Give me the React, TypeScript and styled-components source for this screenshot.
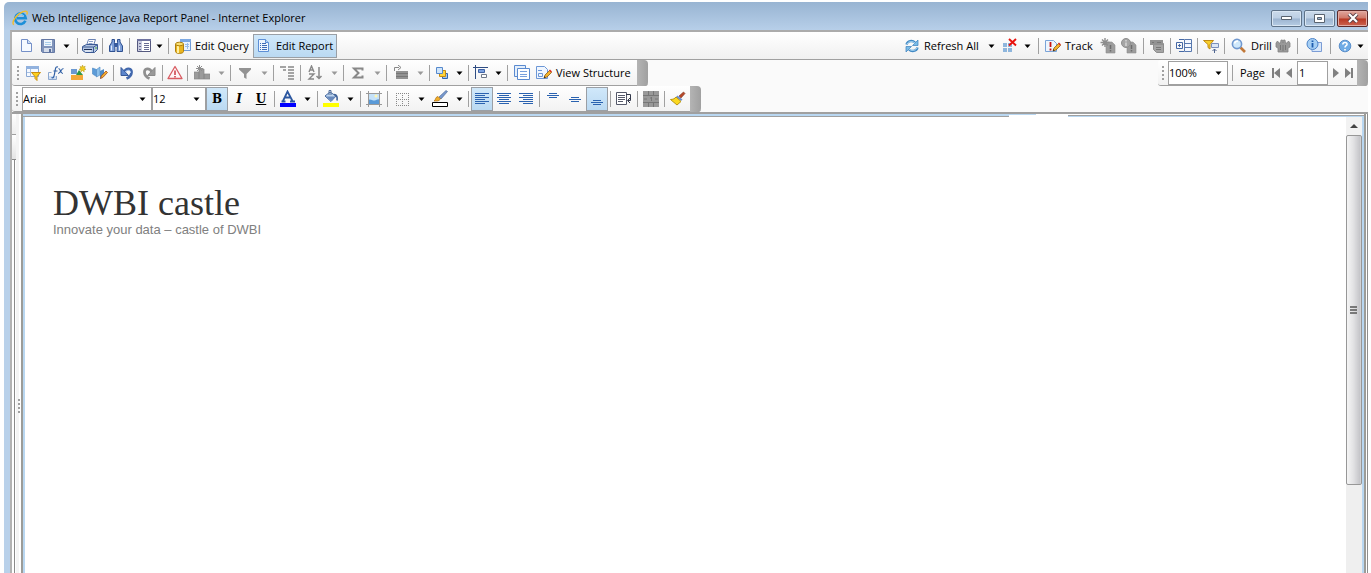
import React from "react";
import styled, { createGlobalStyle } from "styled-components";

const Global = createGlobalStyle`
  * { box-sizing: border-box; }
  body { margin: 0; background: #fff; }
  button, input, select { font: inherit; color: inherit; }
  svg { flex: none; }
`;

const Window = styled.div`
  display: flex;
  flex-direction: column;
  min-height: 100vh;
  padding: 2px 3px 0 4px;
  font-family: "Open Sans", "Noto Sans", sans-serif;
  font-size: 11px;
  line-height: 16px;
  color: #000;
`;

const TitleBar = styled.header`
  display: flex;
  align-items: center;
  height: 28px;
  padding: 4px 0 0 8px;
  gap: 4px;
  background: linear-gradient(#98b4d2, #b7cfe9);
  border-top-left-radius: 5px;
`;

const Title = styled.h1`
  flex: 1;
  margin: 0;
  font-size: 11px;
  font-weight: 400;
  white-space: nowrap;
`;

const Controls = styled.div`
  display: flex;
  gap: 2px;
`;

const Control = styled.button<{ $close?: boolean }>`
  display: flex;
  align-items: center;
  justify-content: center;
  width: 31px;
  height: 17px;
  padding: 0;
  border: 1px solid ${(p) => (p.$close ? "#5e2a2a" : "#5f7389")};
  border-radius: 2px;
  background: ${(p) =>
    p.$close
      ? "linear-gradient(#e0a79e, #cf7768 48%, #b83722 52%, #cc6552)"
      : "linear-gradient(#cbdaea, #bccfe4 48%, #9cb4d0 52%, #b6cce4)"};
  box-shadow: inset 0 0 0 1px ${(p) => (p.$close ? "#e3aca4" : "#d9e6f3")};
`;

const Frame = styled.main`
  display: flex;
  flex: 1;
  flex-direction: column;
  border-left: 6px solid #b9d1ea;
`;

const Inner = styled.div`
  display: flex;
  flex: 1;
  flex-direction: column;
  border-top: 2px solid #ababab;
  border-left: 2px solid #b2b2b2;
`;

const Bar = styled.div`
  display: flex;
  align-items: center;
  height: 28px;
  padding: 0 3px;
  border-bottom: 1px solid #a0a0a0;
  background: linear-gradient(#fff, #f0f0f0);
`;

const Dock = styled.div`
  display: flex;
  justify-content: space-between;
  height: 26px;
  background: #fafafa;
`;

const Strip = styled.div`
  display: flex;
  align-items: center;
  height: 26px;
  border-bottom: 1px solid #a0a0a0;
  border-radius: 3px;
  background: linear-gradient(#fff, #f2f2f2);
`;

const Spacer = styled.div`
  flex: 1;
`;

const EndCap = styled.div`
  width: 11px;
  height: 26px;
  margin-left: 1px;
  border-radius: 0 4px 4px 0;
  background: linear-gradient(90deg, #b4b4b4, #a0a0a0);
`;

const Grip = styled.div<{ $w?: number }>`
  display: flex;
  flex-direction: column;
  align-items: center;
  gap: 2px;
  width: ${(p) => p.$w ?? 10}px;

  i {
    width: 2px;
    height: 2px;
    background: #a0a0a0;
  }
`;

const Sep = styled.div<{ $m?: number }>`
  width: 1px;
  height: 16px;
  margin: 0 ${(p) => p.$m ?? 2}px;
  background: #a0a0a0;
`;

const Tool = styled.button<{ $w?: number; $on?: boolean }>`
  display: flex;
  flex: none;
  align-items: center;
  justify-content: center;
  width: ${(p) => p.$w ?? 22}px;
  height: 24px;
  padding: 0;
  border: 1px solid ${(p) => (p.$on ? "#9a9fa5" : "transparent")};
  background: ${(p) => (p.$on ? "linear-gradient(#d0e8fa, #bad9f2)" : "none")};
`;

const TextTool = styled(Tool)<{ $pad?: number }>`
  justify-content: flex-start;
  gap: 4px;
  padding-left: ${(p) => p.$pad ?? 1}px;
  white-space: nowrap;
`;

const SelectBox = styled.label<{ $w: number }>`
  display: grid;
  align-items: center;
  width: ${(p) => p.$w}px;
  height: 24px;
  border: 1px solid #a0a0a0;
  background: #fff;

  > * { grid-area: 1 / 1; }
  > svg { justify-self: end; margin-right: 5px; pointer-events: none; }
`;

const Select = styled.select`
  width: 100%;
  height: 100%;
  padding: 0;
  border: 0;
  appearance: none;
  background: transparent;
`;

const PageLabel = styled.label`
  display: flex;
  align-items: center;
  padding-left: 3px;
  width: 32px;
`;

const PageInput = styled.input`
  width: 31px;
  height: 24px;
  margin: 0 2px;
  padding: 0 1px;
  border: 1px solid #a0a0a0;
  background: #fff;
`;

const Workspace = styled.div`
  display: flex;
  flex: 1;
  border-top: 2px solid #a0a0a0;
`;

const Rail = styled.aside`
  display: flex;
  width: 9px;
  background: #fff;
`;

const RailTabs = styled.div`
  display: flex;
  flex-direction: column;
  width: 4px;

  div:nth-child(1) { height: 21px; border-bottom: 1px solid #a0a0a0; background: linear-gradient(#fff, #eee); }
  div:nth-child(2) { height: 25px; border-bottom: 1px solid #8a8a8a; background: linear-gradient(#fff, #e4e4e4); }
  div:nth-child(3) { flex: 1; width: 3px; border-right: 1px solid #8a8a8a; }
`;

const RailGrip = styled.div`
  width: 5px;
  padding-top: 285px;
  background: linear-gradient(90deg, #f4f4f4 60%, #fff 60%);
`;

const Report = styled.section`
  display: flex;
  flex: 1;
  flex-direction: column;
  border: solid #9c9c98;
  border-width: 0 2px;
`;

const TopEdge = styled.div`
  display: flex;
  height: 3px;
`;

const EdgeLeft = styled.div`
  flex: 987;
  border-top: 2px solid #b9d7f1;
  border-bottom: 1px solid #a0a0a0;
`;

const EdgeFade = styled.div`
  flex: 27;
  height: 1px;
  background: #b9d7f1;
`;

const EdgeGap = styled.div`
  flex: 32;
`;

const EdgeRight = styled.div`
  flex: 296;
  margin-top: 1px;
  border-top: 1px solid #a0a0a0;
  border-bottom: 1px solid #b9d7f1;
`;

const Sheet = styled.div`
  display: flex;
  flex: 1;
  border: solid #b9d7f1;
  border-width: 0 2px;
`;

const Canvas = styled.article`
  flex: 1;
  padding: 67px 28px;
  background: #fff;
`;

const Heading = styled.h2`
  margin: 0;
  font: 400 36px/38px Georgia, "Liberation Serif", serif;
  color: #333;
`;

const Tagline = styled.p`
  margin: 0;
  font: 13px/16px Arial, "Liberation Sans", sans-serif;
  color: #808080;
`;

const ScrollBar = styled.div`
  display: flex;
  flex-direction: column;
  width: 16px;
  background: #efefef;
`;

const ScrollUp = styled.button`
  display: flex;
  align-items: center;
  justify-content: center;
  height: 18px;
  padding: 0;
  border: 0;
  background: #f2f2f2;
`;

const ScrollTrack = styled.div`
  flex: 1;
`;

const Thumb = styled.div`
  display: flex;
  align-items: center;
  justify-content: center;
  height: 80%;
  border: 1px solid #979797;
  border-radius: 2px;
  background: linear-gradient(90deg, #f5f5f5, #e2e2e4 45%, #c6c6ca 90%, #d8d8da);
`;

const Edge = styled.div`
  width: 2px;
  border-right: 1px solid #8e8e8e;
`;

const Icon = ({ children, w = 16, h = 16 }: { children: React.ReactNode; w?: number; h?: number }) => (
  <svg width={w} height={h} viewBox={`0 0 ${w} ${h}`} fill="none" aria-hidden="true">
    {children}
  </svg>
);

const Arrow = ({ dim }: { dim?: boolean }) => (
  <svg width="7" height="4" viewBox="0 0 7 4" aria-hidden="true">
    <path d="M0.5 0.5h6L3.5 4z" fill={dim ? "#999" : "#000"} />
  </svg>
);

const Caret = ({ w = 14, dim, label }: { w?: number; dim?: boolean; label: string }) => (
  <Tool $w={w} aria-label={label}>
    <Arrow dim={dim} />
  </Tool>
);

const Dots = ({ w }: { w?: number }) => (
  <Grip $w={w}>
    <i /><i /><i /><i />
  </Grip>
);

const Lines = ({ rows }: { rows: [number, number, number][] }) => (
  <Icon>
    {rows.map(([x, y, w]) => (
      <path key={y} d={`M${x} ${y}.5h${w}`} stroke="#2a62b0" />
    ))}
  </Icon>
);

const Pencil = () => (
  <>
    <path d="M8 13l1-3 4.5-4.5 2 2L11 12z" fill="#f3b32c" stroke="#8a5a18" strokeWidth=".8" />
    <path d="M13 5.5l1-1 2 2-1 1z" fill="#d92b1c" />
    <path d="M8 13l.6-1.7 1 1z" fill="#111" />
  </>
);

const IELogo = () => (
  <Icon>
    <path d="M13.400 10.800A5.300 5.300 0 1 1 13.800 8.300H5" stroke="#1d8fd8" strokeWidth="2.600" />
    <path d="M4 6.500C5.500 3.800 10 3.500 12 6" stroke="#8fd8fa" strokeWidth=".9" />
    <path d="M1.800 14.800C-.8 12.500 4 4.500 11 1.700 15 .2 15.800 2 14.800 4.400" stroke="#f2bd2c" strokeWidth="1.400" />
  </Icon>
);
const NewDoc = () => (
  <Icon>
    <path d="M3.500 1.500h6l4 4v8h-10z" fill="#f6faff" stroke="#7590c8" />
    <path d="M9.500 1.500v4h4" fill="#c8dcf4" stroke="#7590c8" />
  </Icon>
);
const Save = () => (
  <Icon>
    <path d="M1.500 1.500h13v13h-12l-1-1z" fill="#8094bb" stroke="#6478a4" />
    <path d="M4 2h8v6H4z" fill="#eef5fc" />
    <path d="M5 4.500h6M5 6.500h6" stroke="#a9cdea" />
    <path d="M4 10h8v4H4z" fill="#d4dcea" />
    <path d="M9 11h2v3H9z" fill="#5b6f9c" />
  </Icon>
);
const Printer = () => (
  <Icon>
    <path d="M6.500 1.500h7l-2 6h-7z" fill="#fff" stroke="#6b83b4" />
    <path d="M7 3.500h4M6.500 5.500h4" stroke="#8aa0c8" />
    <path d="M.5 8.500l4-2h11v5l-3 3h-9l-3-2z" fill="#b4c6e2" stroke="#3c5a94" />
    <path d="M1 9h10.500l3.500-2M11.500 9v5" stroke="#3c5a94" />
    <path d="M2 11.500h8" stroke="#1d2f55" />
    <path d="M3 13h6" stroke="#fff" />
    <path d="M13 10h2" stroke="#4daa3c" />
  </Icon>
);
const Binoculars = () => (
  <Icon>
    <path d="M4 1.500h2.500v3l.5 9H1.500V8L4 4zM9.500 1.500H12V4l2.500 4v5.500H9l.5-9z" fill="#7c9ed8" stroke="#2f5191" />
    <path d="M7 5h2v4H7z" fill="#355aa0" />
    <path d="M3.500 7.500v5M11.500 7.500v5" stroke="#e3eeff" />
  </Icon>
);
const PanelIcon = () => (
  <Icon>
    <path d="M1.500 1.500h13v12h-13z" fill="#fff" stroke="#55597f" />
    <path d="M1 1h14v2H1z" fill="#6f73a0" />
    <path d="M2 3h4v10H2z" fill="#c9cce0" />
    <path d="M3 5.500h2M3 8.500h2M3 11.500h2M8 5.500h5M8 7.500h5M8 9.500h5M8 11.500h5" stroke="#686c94" />
  </Icon>
);
const QueryIcon = () => (
  <Icon>
    <path d="M5.500 1.500h10v11h-10z" fill="#eaf3fd" stroke="#6e9bd8" />
    <path d="M5 1h11v3H5z" fill="#7da9e3" />
    <path d="M10 6.500h4M10 8.500h4M12.500 5v6" stroke="#9bbde8" />
    <path d="M.5 6v7.500c0 2.500 8 2.500 8 0V6" fill="#e9b520" stroke="#ae7f10" />
    <path d="M3 7v8" stroke="#fff0a0" strokeWidth="2" />
    <ellipse cx="4.500" cy="6" rx="4" ry="1.800" fill="#f9df70" stroke="#ae7f10" />
  </Icon>
);
const ReportIcon = () => (
  <Icon>
    <path d="M2.500 1.500h7l3 3v9h-10z" fill="#edf5ff" stroke="#5d8fd6" />
    <path d="M9.500 1.500v3h3" fill="#b6d2f3" stroke="#5d8fd6" />
    <path d="M4 5.500h1M6 5.500h4M4 7.500h1M6 7.500h5M4 9.500h1M6 9.500h5M4 11.500h1M6 11.500h5" stroke="#3d6bb5" />
  </Icon>
);
const Refresh = () => (
  <Icon>
    <path d="M2.500 6.500C3.500 2.500 8.500 2 11 4.500" stroke="#4189c4" strokeWidth="2.400" />
    <path d="M13.500 9.500c-1 4-6 4.500-8.500 2" stroke="#4189c4" strokeWidth="2.400" />
    <path d="M14 2v5.500H8.500zM2 14V8.500h5.500z" fill="#7abce8" stroke="#3b80bb" strokeWidth=".7" />
    <path d="M3 6C4.500 3 8.500 2.800 11 5M13 10c-1.500 3-5.500 3.200-8 1" stroke="#b7e0f8" strokeWidth=".9" />
  </Icon>
);
const Purge = () => (
  <Icon>
    <path d="M1 5h4v4H1zM1 10h4v4H1zM6 10h4v4H6zM6 5h4v4H6z" fill="#8eb6dd" />
    <path d="M7 1l7 6.500M14 1L7 7.500" stroke="#e8120c" strokeWidth="1.900" />
  </Icon>
);
const TrackIcon = () => (
  <Icon>
    <path d="M.5 2.500h8l3 3v8H.5z" fill="#eef5fd" stroke="#7aa4d8" />
    <path d="M5.500 4v5M5.500 10.500v2" stroke="#c81414" strokeWidth="1.800" />
    <Pencil />
  </Icon>
);
const GreyDoc = ({ info }: { info?: boolean }) => (
  <Icon>
    <path d="M6 4h6l3 3v8H6z" fill="#9d9d9d" stroke="#8e8e8e" strokeWidth=".6" />
    {info ? (
      <>
        <circle cx="5" cy="5" r="4.500" fill="#a5a5a5" stroke="#8e8e8e" />
        <path d="M5 2v1.500M5 4.500V8" stroke="#eee" />
      </>
    ) : (
      <path d="M5 0v9M.5 4.500h9M2 1.500l6 6M8 1.500l-6 6" stroke="#8e8e8e" strokeWidth="1.400" />
    )}
    <path d="M10.500 7v4M10.500 12v1.500" stroke="#6c6c6c" strokeWidth="1.500" />
  </Icon>
);
const GreyNote = () => (
  <Icon>
    <path d="M4.500 5.500h10v9h-7l-3-3z" fill="#a4a4a4" stroke="#8d8d8d" />
    <path d="M1 2h13v5H1z" fill="#929292" />
    <path d="M3 4.500h2M8 4.500h4M7 9.500h5M7 11.500h5" stroke="#777" />
  </Icon>
);
const TableIcon = () => (
  <Icon>
    <path d="M8.500 1.500h7v12h-7zM8.500 5.500h7M8.500 9.500h7" fill="#f2f7ff" stroke="#5878ae" />
    <path d="M.5 4.500h6v6h-6zM2 7.500h3M3.500 6v3M3 1.500h5M3 13.500h5" stroke="#4568a5" />
  </Icon>
);
const FilterBar = () => (
  <Icon>
    <path d="M.5 2.500h10L7 6.500V11l-2-1.500v-3z" fill="#f8cf2b" stroke="#c18b12" />
    <path d="M8.500 5.500h7v4h-7z" fill="#dce6f5" stroke="#7b8fba" />
    <path d="M11.500 15v-4M9.500 13l2-2 2 2" stroke="#4f6590" />
  </Icon>
);
const Lens = () => (
  <Icon>
    <path d="M9.500 9.500L14 14" stroke="#c2793a" strokeWidth="2.600" />
    <circle cx="6" cy="6" r="4.600" fill="#cfe8fb" stroke="#7098cf" strokeWidth="1.600" />
    <path d="M3.500 5.500c.5-2 2-2.500 3.500-2.500" stroke="#fff" strokeWidth="1.500" />
  </Icon>
);
const Snapshot = () => (
  <Icon>
    <path d="M1 5l1.500-2L4 5h1.500L6 2h1.500L8 5l.5-3H10l.5 3H12l1.500-2L15 5v4l-2 1v4H3v-4L1 9z" fill="#999" stroke="#838383" strokeWidth=".8" />
    <path d="M5.500 7v5M8 7v6M10.500 7v5" stroke="#777" />
  </Icon>
);
const InfoIcon = () => (
  <Icon>
    <path d="M9 4.500h6.500v9H6V12" fill="#d9e8fa" stroke="#7b9cd5" />
    <circle cx="6.500" cy="6" r="5.500" fill="#a6cff4" stroke="#4c83c8" />
    <path d="M6.500 2.500V4M6.500 5v4.500" stroke="#1d5cae" strokeWidth="1.800" />
  </Icon>
);
const Help = () => (
  <Icon>
    <circle cx="8" cy="8" r="5.800" fill="#6fabe5" stroke="#5b8fca" />
    <path d="M5.800 6.500C6 3.500 10.500 4 10 6.500 9.800 7.800 8 7.800 8 9.500M8 11v1.500" stroke="#fff" strokeWidth="1.600" />
  </Icon>
);
const TableFilter = () => (
  <Icon>
    <path d="M.5 1.500h12v10H.5z" fill="#f5f9ff" stroke="#8aa8d4" />
    <path d="M0 1h13v3H0z" fill="#92b2de" />
    <path d="M4.500 4v8M1 7.500h11" stroke="#a8c0e2" />
    <path d="M5.500 7.500h9L11 11.500v4l-2-2v-2z" fill="#fbd01f" stroke="#c98e10" />
  </Icon>
);
const Formula = () => (
  <Icon>
    <path d="M3.500 7.500h-3v7h8V11" stroke="#8ea9cf" />
    <path d="M1 11h7v3H1z" fill="#cfdef2" />
    <path d="M3.500 12.500c2 1 2.500-1 3-3.500l.8-4.500C7.700 2 8.500 1.500 10 2M5.500 6h4M10.500 3.500c2.500 0 1.500 5 4.500 5M15.500 3.500c-2.500 0-3 5-5.500 5" stroke="#2f5fa5" strokeWidth="1.200" />
  </Icon>
);
const Shapes = () => (
  <Icon>
    <path d="M1 4h6v5H1z" fill="#6b99d1" />
    <path d="M1 10h12v5H1z" fill="#f4a838" />
    <path d="M9 5l4 5H6z" fill="#2f9646" />
    <path d="M12.500 0l.7 2 2-.7-.8 2 1.600 1-2 .6.200 2-1.700-1.400-1.700 1.400.3-2L9 4.300l2-.8-1-2 2 .6z" fill="#f4cf1c" stroke="#b49412" strokeWidth=".5" />
  </Icon>
);
const Maps = () => (
  <Icon>
    <path d="M.5 3l4 1.500v7L.5 9z" fill="#5b9bd8" stroke="#4a86c2" strokeWidth=".6" />
    <path d="M4.500 4.500L8 2v8l-3.500 2z" fill="#8cc0ea" stroke="#4a86c2" strokeWidth=".6" />
    <path d="M8 6l4-2v7l-4 3z" fill="#4c8bc8" />
    <path d="M8.500 13.500l.8-2.500L14 6l1.500 1.500-4.700 5z" fill="#f3b32c" stroke="#a3461c" strokeWidth=".8" />
  </Icon>
);
const Undo = ({ dim }: { dim?: boolean }) => (
  <Icon>
    <g transform={dim ? "translate(16 0) scale(-1 1)" : undefined}>
      <path d="M5 7C7.500 2.500 13 3 12.500 7.500c-.2 3-2.500 5-5 6" stroke={dim ? "#8f8f8f" : "#4167ac"} strokeWidth="2.800" />
      <path d="M2 2.500v8h7.500z" fill={dim ? "#999" : "#5b85cc"} stroke={dim ? "#8a8a8a" : "#365998"} />
      {!dim && <path d="M6 7c3-3 6-2 5.500 1" stroke="#a8c6f0" />}
    </g>
  </Icon>
);
const Warn = () => (
  <Icon>
    <path d="M8 1.500L1 13.500h14z" fill="#fff6f6" stroke="#d85c62" strokeWidth="1.300" strokeLinejoin="round" />
    <path d="M8 5.500V10M8 11v1.500" stroke="#ca3a42" strokeWidth="1.500" />
  </Icon>
);
const GreyChart = () => (
  <Icon>
    <path d="M0 7h5v7H0zM5 4h5v10H5zM10 9h6v5h-6z" fill="#9b9b9b" stroke="#868686" strokeWidth=".7" />
    <path d="M5.500 0v7M2 3.500h7M3 1l5 5M8 1L3 6" stroke="#8f8f8f" />
  </Icon>
);
const GreyFilter = () => (
  <Icon><path d="M2 3h12v1.500L9.500 9v5L7 12.500V9L2 4.500z" fill="#939393" /></Icon>
);
const GreyOutline = () => (
  <Icon>
    <path d="M1 2h6M9 2h6M9 5h6M4 5h3M9 8h6M9 11h6M9 14h6" stroke="#888" strokeWidth="1.600" />
  </Icon>
);
const GreySort = () => (
  <Icon>
    <path d="M2 7l2.500-6L7 7M3 5h3M2 9h5l-5 5h5" stroke="#888" strokeWidth="1.400" />
    <path d="M12 2v11M9.500 11l2.500 2.500 2.500-2.500" stroke="#888" strokeWidth="1.500" />
  </Icon>
);
const Sigma = () => (
  <Icon><path d="M12.500 5.500V3.500H4L8.500 8 4 12.500h8.500v-2" stroke="#888" strokeWidth="2" /></Icon>
);
const GreyBreak = () => (
  <Icon>
    <path d="M3 6h12v8H3z" fill="#929292" />
    <path d="M3 8.500h12M3 11.500h12" stroke="#777" />
    <path d="M1.500 6V2.500H6M5 0l3 2.500L5 5" stroke="#888" />
  </Icon>
);
const Layers = () => (
  <Icon>
    <path d="M8.500 8.500h5v5h-5z" fill="#a3c5ec" stroke="#3266af" />
    <path d="M5.500 5.500h6v6h-6z" fill="#ffd43a" stroke="#c58b10" />
    <path d="M2.500 2.500h6v6h-6z" fill="#cfe5fb" stroke="#5689cc" />
  </Icon>
);
const AlignObj = () => (
  <Icon>
    <path d="M0 2.500h15M2.500 0v14" stroke="#2f4d83" />
    <path d="M5.500 4.500h6v3h-6z" fill="#7ca2e0" stroke="#3e62a6" />
    <path d="M8.500 9.500h5v3h-5z" fill="#fff" stroke="#6f7888" />
  </Icon>
);
const Pages = () => (
  <Icon>
    <path d="M.5.5h11v11H.5z" fill="#e4effb" stroke="#5a8ad0" />
    <path d="M3.500 3.500h12v11h-12z" fill="#fff" stroke="#5a8ad0" />
    <path d="M6 6.500h7M6 9.500h7M6 11.500h7" stroke="#79a0dc" />
  </Icon>
);
const StructureIcon = () => (
  <Icon>
    <path d="M.5 1.500h8l3 3v9H.5z" fill="#f0f6fe" stroke="#6c97d6" />
    <path d="M2 5.500h4M2.500 8.500h4v3h-4z" stroke="#6c97d6" />
    <Pencil />
  </Icon>
);
const ColorBar = ({ color, children }: { color: string; children: React.ReactNode }) => (
  <Icon w={18} h={18}>
    {children}
    <path d="M1 13h16v4H1z" fill={color} />
  </Icon>
);
const Picture = () => (
  <Icon>
    <path d="M2 2h12v12H2z" fill="#c5e2f9" />
    <path d="M2 9c3-2 5 2 8 0 2-1 3-1 4 0v5H2z" fill="#5a9ad7" />
    <circle cx="10" cy="5" r="1.500" fill="#fff6b0" />
    <path d="M2.500 0v16M13.500 0v16M0 2.500h16M0 13.500h16" stroke="#999" />
  </Icon>
);
const Borders = () => (
  <Icon>
    <path d="M2 2.500h13M2 8.500h13M2 14.500h13M2.500 2v13M8.500 2v13M14.500 2v13" stroke="#888" strokeDasharray="1 1" />
  </Icon>
);
const Wrap = () => (
  <Icon>
    <path d="M.5 1.500h10v12H.5z" fill="#fff" stroke="#55596a" />
    <path d="M2 4.500h7M2 6.500h7M2 8.500h7M2 10.500h5" stroke="#55596a" />
    <path d="M10 3.500h4.500v6H12M14 7l-2.500 2.500L14 12" stroke="#33384a" />
  </Icon>
);
const Merge = () => (
  <Icon>
    <path d="M0 0h16v16H0z" fill="#999" />
    <path d="M0 4.500h16M0 11.500h16M5.500 0v4M10.500 0v4M5.500 12v4M10.500 12v4M1 8h3M12 8h3M8.500 6v4M7 7h1.500" stroke="#777" />
  </Icon>
);
const Painter = () => (
  <Icon>
    <path d="M9 5l4.500-4L15 2.500 11 7z" fill="#b8482a" stroke="#7d3520" strokeWidth=".6" />
    <path d="M7.500 4.500l5 4L11 10 6 6z" fill="#6c8fcd" />
    <path d="M6 6l5 4.500-4 3.500L.5 8.500C3 8.500 5 7.500 6 6z" fill="#fbd81f" stroke="#b99514" />
  </Icon>
);
const Step = ({ last }: { last?: boolean }) => (
  <Icon w={8} h={10}>
    <path d={last ? "M0 0l6 5-6 5zM6 0h2v10H6z" : "M8 0L2 5l6 5zM0 0h2v10H0z"} fill="#808080" />
  </Icon>
);
const Go = ({ next }: { next?: boolean }) => (
  <Icon w={6} h={10}>
    <path d={next ? "M0 0l6 5-6 5z" : "M6 0L0 5l6 5z"} fill="#808080" />
  </Icon>
);

const Glyph = styled.span<{ $italic?: boolean; $under?: boolean }>`
  font: ${(p) => (p.$italic ? "italic" : "normal")} 700 12px/16px "DejaVu Serif", serif;
  text-decoration: ${(p) => (p.$under ? "underline" : "none")};
`;

export default function App() {
  return (
    <>
      <Global />
      <Window>
        <TitleBar>
          <IELogo />
          <Title>Web Intelligence Java Report Panel - Internet Explorer</Title>
          <Controls>
            <Control aria-label="Minimize">
              <Icon w={12} h={6}><path d="M.5 1.500h10v3H.5z" fill="#fff" stroke="#59636f" /></Icon>
            </Control>
            <Control aria-label="Maximize">
              <Icon w={11} h={9}>
                <path d="M.5.500h10v8H.500z" fill="#fff" stroke="#59636f" />
                <path d="M3.500 3.500h4v2h-4z" fill="#9cb4d0" stroke="#59636f" />
              </Icon>
            </Control>
            <Control $close aria-label="Close">
              <Icon w={12} h={10}>
                <path d="M2 1l8 8M10 1L2 9" stroke="#5b4048" strokeWidth="4" />
                <path d="M2 1l8 8M10 1L2 9" stroke="#fff" strokeWidth="2.200" />
              </Icon>
            </Control>
          </Controls>
        </TitleBar>
        <Frame>
          <Inner>
            <Bar role="toolbar" aria-label="Main">
              <Tool aria-label="New"><NewDoc /></Tool>
              <Tool aria-label="Save"><Save /></Tool>
              <Caret label="Save options" />
              <Sep $m={4} />
              <Tool $w={16} aria-label="Print"><Printer /></Tool>
              <Sep $m={4} />
              <Tool $w={18} aria-label="Find"><Binoculars /></Tool>
              <Sep $m={4} />
              <Tool $w={20} aria-label="Panels"><PanelIcon /></Tool>
              <Caret w={10} label="Panel options" />
              <Sep $m={4} />
              <TextTool $w={80}><QueryIcon />Edit Query</TextTool>
              <TextTool $w={84} $on $pad={2}><ReportIcon />Edit Report</TextTool>
              <Spacer />
              <TextTool $w={80}><Refresh />Refresh All</TextTool>
              <Caret w={18} label="Refresh options" />
              <Tool $w={20} aria-label="Purge"><Purge /></Tool>
              <Caret label="Purge options" />
              <Sep $m={4} />
              <TextTool $w={54}><TrackIcon />Track</TextTool>
              <Tool aria-label="Show changes"><GreyDoc /></Tool>
              <Tool $w={20} aria-label="Change info"><GreyDoc info /></Tool>
              <Sep $m={4} />
              <Tool $w={18} aria-label="Notes"><GreyNote /></Tool>
              <Sep $m={4} />
              <Tool $w={18} aria-label="Outline"><TableIcon /></Tool>
              <Sep $m={4} />
              <Tool $w={18} aria-label="Filter bar"><FilterBar /></Tool>
              <Sep $m={4} />
              <TextTool $w={44}><Lens />Drill</TextTool>
              <Tool $w={20} aria-label="Snapshot"><Snapshot /></Tool>
              <Sep $m={4} />
              <Tool $w={24} aria-label="Information"><InfoIcon /></Tool>
              <Sep $m={4} />
              <Tool $w={20} aria-label="Help"><Help /></Tool>
              <Caret w={10} label="Help options" />
            </Bar>
            <Dock>
              <Strip role="toolbar" aria-label="Report">
                <Dots w={11} />
                <Tool aria-label="Filter table"><TableFilter /></Tool>
                <Tool aria-label="Formula"><Formula /></Tool>
                <Tool aria-label="Variable"><Shapes /></Tool>
                <Tool aria-label="Map"><Maps /></Tool>
                <Sep />
                <Tool aria-label="Undo"><Undo /></Tool>
                <Tool aria-label="Redo"><Undo dim /></Tool>
                <Sep />
                <Tool $w={20} aria-label="Alerter"><Warn /></Tool>
                <Sep />
                <Tool $w={24} aria-label="Rank"><GreyChart /></Tool>
                <Caret dim label="Rank options" />
                <Sep />
                <Tool $w={24} aria-label="Filter"><GreyFilter /></Tool>
                <Caret dim label="Filter options" />
                <Sep />
                <Tool aria-label="Section"><GreyOutline /></Tool>
                <Sep />
                <Tool $w={24} aria-label="Sort"><GreySort /></Tool>
                <Caret dim label="Sort options" />
                <Sep />
                <Tool $w={24} aria-label="Sum"><Sigma /></Tool>
                <Caret dim label="Sum options" />
                <Sep />
                <Tool $w={24} aria-label="Insert"><GreyBreak /></Tool>
                <Caret dim label="Insert options" />
                <Sep />
                <Tool $w={20} aria-label="Order"><Layers /></Tool>
                <Caret label="Order options" />
                <Sep />
                <Tool $w={20} aria-label="Align"><AlignObj /></Tool>
                <Caret label="Align options" />
                <Sep />
                <Tool $w={24} aria-label="Page layout"><Pages /></Tool>
                <TextTool $w={102}><StructureIcon />View Structure</TextTool>
                <EndCap />
              </Strip>
              <Strip role="toolbar" aria-label="Navigation">
                <Dots />
                <SelectBox $w={60}>
                  <Select aria-label="Zoom"><option>100%</option></Select>
                  <Arrow />
                </SelectBox>
                <Sep $m={4} />
                <PageLabel htmlFor="page">Page</PageLabel>
                <Tool $w={14} aria-label="First page"><Step /></Tool>
                <Tool $w={12} aria-label="Previous page"><Go /></Tool>
                <PageInput id="page" defaultValue="1" />
                <Tool $w={12} aria-label="Next page"><Go next /></Tool>
                <Tool $w={14} aria-label="Last page"><Step last /></Tool>
                <EndCap />
              </Strip>
            </Dock>
            <Dock>
              <Strip role="toolbar" aria-label="Formatting">
                <Dots />
                <SelectBox $w={130}>
                  <Select aria-label="Font"><option>Arial</option></Select>
                  <Arrow />
                </SelectBox>
                <SelectBox $w={54}>
                  <Select aria-label="Font size"><option>12</option></Select>
                  <Arrow />
                </SelectBox>
                <Tool $on aria-label="Bold"><Glyph>B</Glyph></Tool>
                <Tool aria-label="Italic"><Glyph $italic>I</Glyph></Tool>
                <Tool aria-label="Underline"><Glyph $under>U</Glyph></Tool>
                <Sep />
                <Tool aria-label="Text colour">
                  <ColorBar color="#00f">
                    <path d="M4 11L8.500 1.500 13.500 11M6 7.500h6M2.500 11.500h4M11 11.500h5" stroke="#2c57a0" strokeWidth="1.800" />
                  </ColorBar>
                </Tool>
                <Caret w={16} label="Text colour options" />
                <Sep />
                <Tool aria-label="Fill colour">
                  <ColorBar color="#ff0">
                    <path d="M3 6l5-4 6 4-5 5.500z" fill="#bcd4ef" stroke="#45699f" />
                    <path d="M4 6.500h10L9 11z" fill="#6789bd" />
                    <path d="M7 5V.5h2V5" stroke="#55719c" />
                    <path d="M12 4.500c3 0 3.500 3 3 6" stroke="#3e6197" strokeWidth="1.600" />
                  </ColorBar>
                </Tool>
                <Caret w={16} label="Fill colour options" />
                <Sep />
                <Tool aria-label="Background picture"><Picture /></Tool>
                <Sep />
                <Tool $w={24} aria-label="Borders"><Borders /></Tool>
                <Caret label="Border options" />
                <Tool $w={24} aria-label="Border colour">
                  <Icon w={18} h={18}>
                    <path d="M8 7l7-6.500 1.500 1L10 9z" fill="#7899ce" stroke="#41608f" strokeWidth=".6" />
                    <path d="M3 11c2-1 1-4 4-4.500L9.500 9C8 11.500 5 11 3 11z" fill="#f0ae2b" stroke="#a86c14" strokeWidth=".7" />
                    <path d="M1.500 12.500h15v4h-15z" fill="#fff" stroke="#000" />
                  </Icon>
                </Tool>
                <Caret label="Border colour options" />
                <Sep />
                <Tool $on aria-label="Align left">
                  <Lines rows={[[1, 2, 14], [1, 4, 10], [1, 6, 14], [1, 8, 10], [1, 10, 14], [1, 12, 10]]} />
                </Tool>
                <Tool aria-label="Align centre">
                  <Lines rows={[[1, 2, 14], [3, 4, 10], [1, 6, 14], [3, 8, 10], [1, 10, 14], [3, 12, 10]]} />
                </Tool>
                <Tool aria-label="Align right">
                  <Lines rows={[[1, 2, 14], [5, 4, 10], [1, 6, 14], [5, 8, 10], [1, 10, 14], [5, 12, 10]]} />
                </Tool>
                <Sep />
                <Tool aria-label="Align top"><Lines rows={[[4, 2, 8], [2, 4, 12], [4, 6, 8]]} /></Tool>
                <Tool aria-label="Align middle"><Lines rows={[[4, 6, 8], [2, 8, 12], [4, 10, 8]]} /></Tool>
                <Tool $on aria-label="Align bottom"><Lines rows={[[4, 9, 8], [2, 11, 12], [4, 13, 8]]} /></Tool>
                <Sep />
                <Tool aria-label="Wrap text"><Wrap /></Tool>
                <Sep />
                <Tool aria-label="Merge cells"><Merge /></Tool>
                <Sep />
                <Tool aria-label="Format painter"><Painter /></Tool>
                <EndCap />
              </Strip>
            </Dock>
            <Workspace>
              <Rail>
                <RailTabs><div /><div /><div /></RailTabs>
                <RailGrip><Dots w={5} /></RailGrip>
              </Rail>
              <Report>
                <TopEdge>
                  <EdgeLeft />
                  <EdgeFade />
                  <EdgeGap />
                  <EdgeRight />
                </TopEdge>
                <Sheet>
                  <Canvas>
                    <Heading>DWBI castle</Heading>
                    <Tagline>Innovate your data – castle of DWBI</Tagline>
                  </Canvas>
                  <ScrollBar>
                    <ScrollUp aria-label="Scroll up">
                      <Icon w={8} h={4}><path d="M0 4l4-4 4 4z" fill="#444" /></Icon>
                    </ScrollUp>
                    <ScrollTrack>
                      <Thumb>
                        <Icon w={8} h={9}><path d="M0 1h7M0 4h7M0 7h7" stroke="#555" strokeWidth="1.500" /></Icon>
                      </Thumb>
                    </ScrollTrack>
                  </ScrollBar>
                </Sheet>
              </Report>
              <Edge />
            </Workspace>
          </Inner>
        </Frame>
      </Window>
    </>
  );
}
